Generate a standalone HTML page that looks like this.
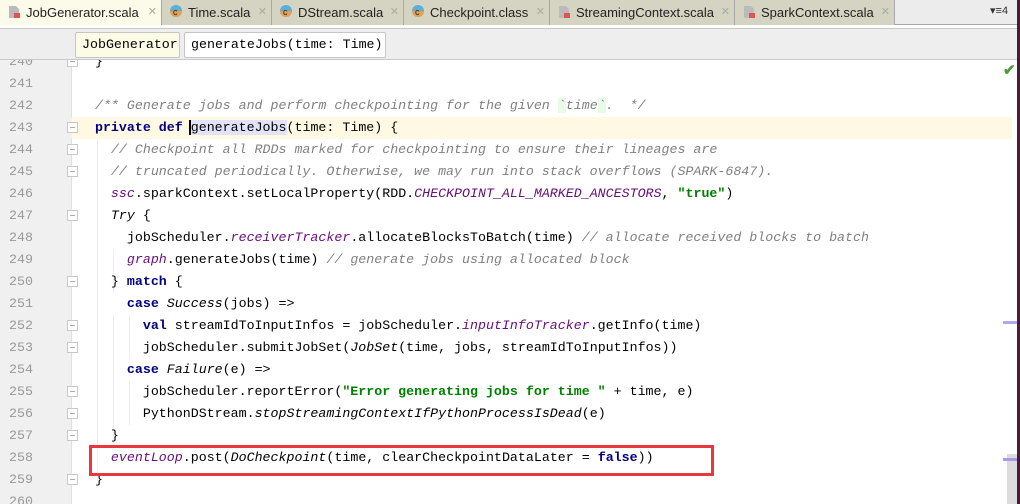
<!DOCTYPE html>
<html><head><meta charset="utf-8"><style>
*{margin:0;padding:0;box-sizing:border-box}
body{width:1020px;height:504px;overflow:hidden;background:#fff;position:relative;font-family:"Liberation Sans",sans-serif}
#tabs{position:absolute;left:0;top:0;width:1020px;height:25px;background:#ececec;border-bottom:1px solid #a8a8a8}
.tab{position:absolute;top:0;height:25px;background:#d5d3c1;border-right:1px solid #a8a8a8;font-size:13px;color:#222;line-height:25px;white-space:nowrap;overflow:hidden}
.tab.act{background:#fcfbe9}
.tab .x{color:#aaa;position:absolute;right:4px;top:0;font-size:11px}
.ic{position:absolute;left:8px;top:5px;width:13px;height:14px}
.tab .t{position:absolute;left:26px}
#bc{position:absolute;left:0;top:28px;width:1020px;height:32px;background:#eeeeee;border-top:1px solid #c8c8c8;border-bottom:1px solid #c8c8c8}
.b{position:absolute;top:3px;height:26px;border:1px solid #c6c6c6;border-radius:2px;font-family:"Liberation Mono",monospace;font-size:13.3px;line-height:24px;padding-left:6px;background:#fff}
#ed{position:absolute;left:0;top:60px;width:1020px;height:444px;overflow:hidden}
#gut{position:absolute;left:0;top:0;width:72px;height:444px;background:#f0f0f0;border-right:1px solid #e0e0e0}
.row{position:absolute;left:0;width:1012px;height:22px;font-family:"Liberation Mono",monospace;font-size:13.3px;line-height:22px;white-space:pre}
.ln{position:absolute;left:0;width:33px;text-align:right;color:#999}
.code{position:absolute;left:79px;color:#000}
.k{color:#000080;font-weight:bold}
.p{color:#660e7a;font-style:italic}
.i{font-style:italic}
.c{color:#808080;font-style:italic}
.s{color:#008000;font-weight:bold}
.fold{position:absolute;left:67px;top:5px;width:11px;height:11px;border:1px solid #c8c8c8;background:#fff}
.fold:after{content:"";position:absolute;left:2px;top:4px;width:5px;height:1px;background:#aaa}
.g{position:absolute;width:1px;background:#ececec}
#rows{position:absolute;left:0;top:2px;width:1020px;height:444px}
</style></head><body>
<div id="tabs">
 <div class="tab act" style="left:0;width:162px"><svg class="ic" viewBox="0 0 13 14"><path d="M1 1h7l3 3v9H1z" fill="#bbb"/><rect x="6" y="8" width="6" height="5" fill="#d55"/></svg><span class="t">JobGenerator.scala</span><span class="x">✕</span></div>
 <div class="tab" style="left:162px;width:110px"><svg class="ic" viewBox="0 0 13 14"><circle cx="6" cy="6" r="6" fill="#5ab0d8"/><path d="M0 6a6 6 0 0 0 12 0z" fill="#e8a050"/><text x="3" y="10" font-size="9" fill="#222">c</text></svg><span class="t">Time.scala</span><span class="x">✕</span></div>
 <div class="tab" style="left:272px;width:132px"><svg class="ic" viewBox="0 0 13 14"><circle cx="6" cy="6" r="6" fill="#5ab0d8"/><path d="M0 6a6 6 0 0 0 12 0z" fill="#e8a050"/><text x="3" y="10" font-size="9" fill="#222">c</text></svg><span class="t">DStream.scala</span><span class="x">✕</span></div>
 <div class="tab" style="left:404px;width:146px"><svg class="ic" viewBox="0 0 13 14"><circle cx="6" cy="6" r="6" fill="#5ab0d8"/><path d="M0 6a6 6 0 0 0 12 0z" fill="#e8a050"/><text x="3" y="10" font-size="9" fill="#222">c</text></svg><span class="t">Checkpoint.class</span><span class="x">✕</span></div>
 <div class="tab" style="left:550px;width:185px"><svg class="ic" viewBox="0 0 13 14"><path d="M1 1h7l3 3v9H1z" fill="#bbb"/><rect x="6" y="8" width="6" height="5" fill="#d55"/></svg><span class="t">StreamingContext.scala</span><span class="x">✕</span></div>
 <div class="tab" style="left:735px;width:160px"><svg class="ic" viewBox="0 0 13 14"><path d="M1 1h7l3 3v9H1z" fill="#bbb"/><rect x="6" y="8" width="6" height="5" fill="#d55"/></svg><span class="t">SparkContext.scala</span><span class="x">✕</span></div>
 <div style="position:absolute;left:990px;top:4px;font-size:11px;color:#333">▾≡4</div>
</div>
<div id="bc">
 <div class="b" style="left:75px;width:105px;background:#fbfbe6">JobGenerator</div>
 <div class="b" style="left:184px;width:202px">generateJobs(time: Time)</div>
</div>
<div id="ed">
 <div id="gut"></div>
 <div id="rows">
 <div class="g" style="left:97px;top:77px;height:342px"></div>
 <div class="g" style="left:113px;top:187px;height:44px"></div>
 <div class="g" style="left:113px;top:253px;height:132px"></div>
 <div class="g" style="left:129px;top:253px;height:44px"></div>
 <div class="g" style="left:129px;top:319px;height:44px"></div>
 <div class="row" style="top:-11px"><span class="ln">240</span><span class="fold"></span><span class="code">  }</span></div>
 <div class="row" style="top:11px"><span class="ln">241</span></div>
 <div class="row" style="top:33px"><span class="ln">242</span><span class="code c">  /** Generate jobs and perform checkpointing for the given <span style="background:#e8fae8">`</span>time<span style="background:#e8fae8">`</span>.  */</span></div>
 <div class="row" style="top:55px;background:#fff9e3"><span class="ln" style="background:#f0f0f0;width:72px;padding-right:39px">243</span><span class="fold"></span><span class="code">  <span class="k">private def </span><span style="background:#e2e2fb;border-left:2px solid #000;margin-left:-2px">generateJobs</span>(time: Time) {</span></div>
 <div class="row" style="top:77px"><span class="ln">244</span><span class="fold"></span><span class="code c">    // Checkpoint all RDDs marked for checkpointing to ensure their lineages are</span></div>
 <div class="row" style="top:99px"><span class="ln">245</span><span class="fold"></span><span class="code c">    // truncated periodically. Otherwise, we may run into stack overflows (SPARK-6847).</span></div>
 <div class="row" style="top:121px"><span class="ln">246</span><span class="code">    <span class="p">ssc</span>.sparkContext.setLocalProperty(RDD.<span class="p">CHECKPOINT_ALL_MARKED_ANCESTORS</span>, <span class="s">"true"</span>)</span></div>
 <div class="row" style="top:143px"><span class="ln">247</span><span class="fold"></span><span class="code">    <span class="i">Try</span> {</span></div>
 <div class="row" style="top:165px"><span class="ln">248</span><span class="code">      jobScheduler.<span class="p">receiverTracker</span>.allocateBlocksToBatch(time) <span class="c">// allocate received blocks to batch</span></span></div>
 <div class="row" style="top:187px"><span class="ln">249</span><span class="code">      <span class="p">graph</span>.generateJobs(time) <span class="c">// generate jobs using allocated block</span></span></div>
 <div class="row" style="top:209px"><span class="ln">250</span><span class="fold"></span><span class="code">    } <span class="k">match</span> {</span></div>
 <div class="row" style="top:231px"><span class="ln">251</span><span class="code">      <span class="k">case </span><span class="i">Success</span>(jobs) =&gt;</span></div>
 <div class="row" style="top:253px"><span class="ln">252</span><span class="fold"></span><span class="code">        <span class="k">val </span>streamIdToInputInfos = jobScheduler.<span class="p">inputInfoTracker</span>.getInfo(time)</span></div>
 <div class="row" style="top:275px"><span class="ln">253</span><span class="fold"></span><span class="code">        jobScheduler.submitJobSet(<span class="i">JobSet</span>(time, jobs, streamIdToInputInfos))</span></div>
 <div class="row" style="top:297px"><span class="ln">254</span><span class="code">      <span class="k">case </span><span class="i">Failure</span>(e) =&gt;</span></div>
 <div class="row" style="top:319px"><span class="ln">255</span><span class="fold"></span><span class="code">        jobScheduler.reportError(<span class="s">"Error generating jobs for time "</span> + time, e)</span></div>
 <div class="row" style="top:341px"><span class="ln">256</span><span class="fold"></span><span class="code">        PythonDStream.<span class="i">stopStreamingContextIfPythonProcessIsDead</span>(e)</span></div>
 <div class="row" style="top:363px"><span class="ln">257</span><span class="fold"></span><span class="code">    }</span></div>
 <div class="row" style="top:385px"><span class="ln">258</span><span class="code">    <span class="p">eventLoop</span>.post(<span class="i">DoCheckpoint</span>(time, clearCheckpointDataLater = <span class="k">false</span>))</span></div>
 <div class="row" style="top:407px"><span class="ln">259</span><span class="fold"></span><span class="code">  }</span></div>
 <div class="row" style="top:429px"><span class="ln">260</span></div>
 </div>
 <div style="position:absolute;left:89px;top:385px;width:625px;height:31px;border:3px solid #e8383d"></div>
 <div style="position:absolute;left:1003px;top:1px;color:#4a9a3a;font-size:15px;font-weight:bold">✔</div>
 <div style="position:absolute;left:1003px;top:261px;width:14px;height:3px;background:#b6a6f0"></div>
 <div style="position:absolute;left:1007px;top:394px;width:11px;height:50px;background:#dcdcdc"></div>
 <div style="position:absolute;left:1003px;top:398px;width:14px;height:3px;background:#a898f0"></div>
</div>
<div style="position:absolute;left:1017px;top:0;width:3px;height:504px;background:#4a1a3a"></div>
</body></html>
